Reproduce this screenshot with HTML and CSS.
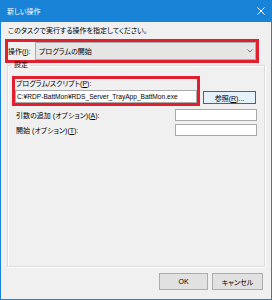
FILE: index.html
```html
<!DOCTYPE html>
<html>
<head>
  <title>新しい操作</title>
  <meta charset="utf-8">
  <link rel="stylesheet" href="styles.css">
</head>
<body>
  <div class="window">
    <div class="titlebar">
      <span class="title">新しい操作</span>
      <svg class="close" width="8" height="8" viewBox="0 0 8 8">
        <path d="M0.5 0.5 L7.5 7.5 M7.5 0.5 L0.5 7.5" stroke="#fff" stroke-width="1"/>
      </svg>
    </div>

    <div class="content">
      <p class="prompt">このタスクで実行する操作を指定してください。</p>

      <div class="mark action-row">
        <span class="action-label">操作(<u>I</u>):</span>
        <div class="combo">
          <span>プログラムの開始</span>
          <svg width="6" height="4" viewBox="0 0 6 4">
            <path d="M0.5 0.5 L3 3 L5.5 0.5" fill="none" stroke="#555" stroke-width="0.8"/>
          </svg>
        </div>
      </div>

      <fieldset class="group">
        <legend>設定</legend>

        <div class="prog-row">
          <div class="mark prog">
            <span class="prog-label">プログラム/スクリプト(<u>P</u>):</span>
            <div class="textbox prog-input">C:¥RDP-BattMon¥RDS_Server_TrayApp_BattMon.exe</div>
          </div>
          <button class="browse">参照(<u>R</u>)...</button>
        </div>

        <div class="field-row">
          <span class="field-label">引数の追加 (オプション)(<u>A</u>):</span>
          <div class="textbox small"></div>
        </div>
        <div class="field-row">
          <span class="field-label">開始 (オプション)(<u>T</u>):</span>
          <div class="textbox small"></div>
        </div>
      </fieldset>

      <div class="footer">
        <button class="btn ok">OK</button>
        <button class="btn cancel">キャンセル</button>
      </div>
    </div>
  </div>
</body>
</html>
```

FILE: styles.css
```css
body {
  margin: 0;
  font-family: "Liberation Sans", "Noto Sans CJK JP", sans-serif;
  font-size: 7px;
  color: #000;
  background: #f0f0f0;
}
.window {
  width: 272px;
  height: 300px;
  box-sizing: border-box;
  border: 1px solid #1883d7;
  border-top: none;
  background: #f0f0f0;
  display: flex;
  flex-direction: column;
}
.titlebar {
  height: 21px;
  margin: 0 -1px;
  background: #1883d7;
  display: flex;
  align-items: center;
  justify-content: space-between;
  padding: 0 7px 1px 7px;
}
.title {
  color: #fff;
  font-size: 7px;
  font-feature-settings: "palt";
}
.close {
  display: block;
}
.content {
  flex: 1;
  display: flex;
  flex-direction: column;
  padding: 0 4px;
  font-feature-settings: "palt";
}
.prompt {
  margin: 4px 0 0 3px;
  line-height: 9px;
}
.mark {
  border: 3px solid #e0202e;
}
.action-row {
  margin: 4px 8px 0 0;
  height: 18px;
  display: flex;
  align-items: center;
}
.action-label {
  width: 27px;
}
.combo {
  flex: 1;
  height: 18px;
  box-sizing: border-box;
  background: #e5e5e5;
  border: 1px solid #adadad;
  display: flex;
  align-items: center;
  justify-content: space-between;
  padding: 0 2px 0 3px;
}
.group {
  flex: 1;
  margin: -2px 2px 0;
  padding: 0 7px 0 4px;
  border: 1px solid #dcdcdc;
  box-shadow: inset 1px 1px 0 #fff, 1px 1px 0 #fff;
  min-width: 0;
}
.group legend {
  padding: 0 2px;
  line-height: 8px;
}
.prog-row {
  margin-top: 7px;
  display: flex;
  align-items: flex-end;
}
.prog {
  width: 182px;
  display: flex;
  flex-direction: column;
}
.prog-label {
  line-height: 9px;
  padding-left: 1px;
  margin-bottom: 2px;
}
.textbox {
  background: #fff;
  border: 1px solid #a9a9a9;
  box-sizing: border-box;
}
.prog-input {
  height: 13px;
  line-height: 11px;
  padding-left: 1px;
  font-size: 6.6px;
  white-space: nowrap;
  overflow: hidden;
}
.browse {
  margin: 0 1px 2px 3px;
  flex: 1;
  height: 13px;
  padding: 0;
  font: inherit;
  font-feature-settings: "palt";
  background: #e5f1fb;
  border: 1px solid #0078d7;
}
.field-row {
  margin-top: 3px;
  display: flex;
  align-items: center;
  justify-content: space-between;
}
.field-label {
  padding-left: 4px;
}
.small {
  width: 82px;
  height: 12px;
}
.footer {
  display: flex;
  justify-content: flex-end;
  gap: 4px;
  padding: 6px 4px 9px;
}
.btn {
  height: 17px;
  padding: 0;
  font: inherit;
  font-feature-settings: "palt";
  background: #e1e1e1;
  border: 1px solid #adadad;
}
.ok {
  width: 49px;
}
.cancel {
  width: 51px;
}
```
